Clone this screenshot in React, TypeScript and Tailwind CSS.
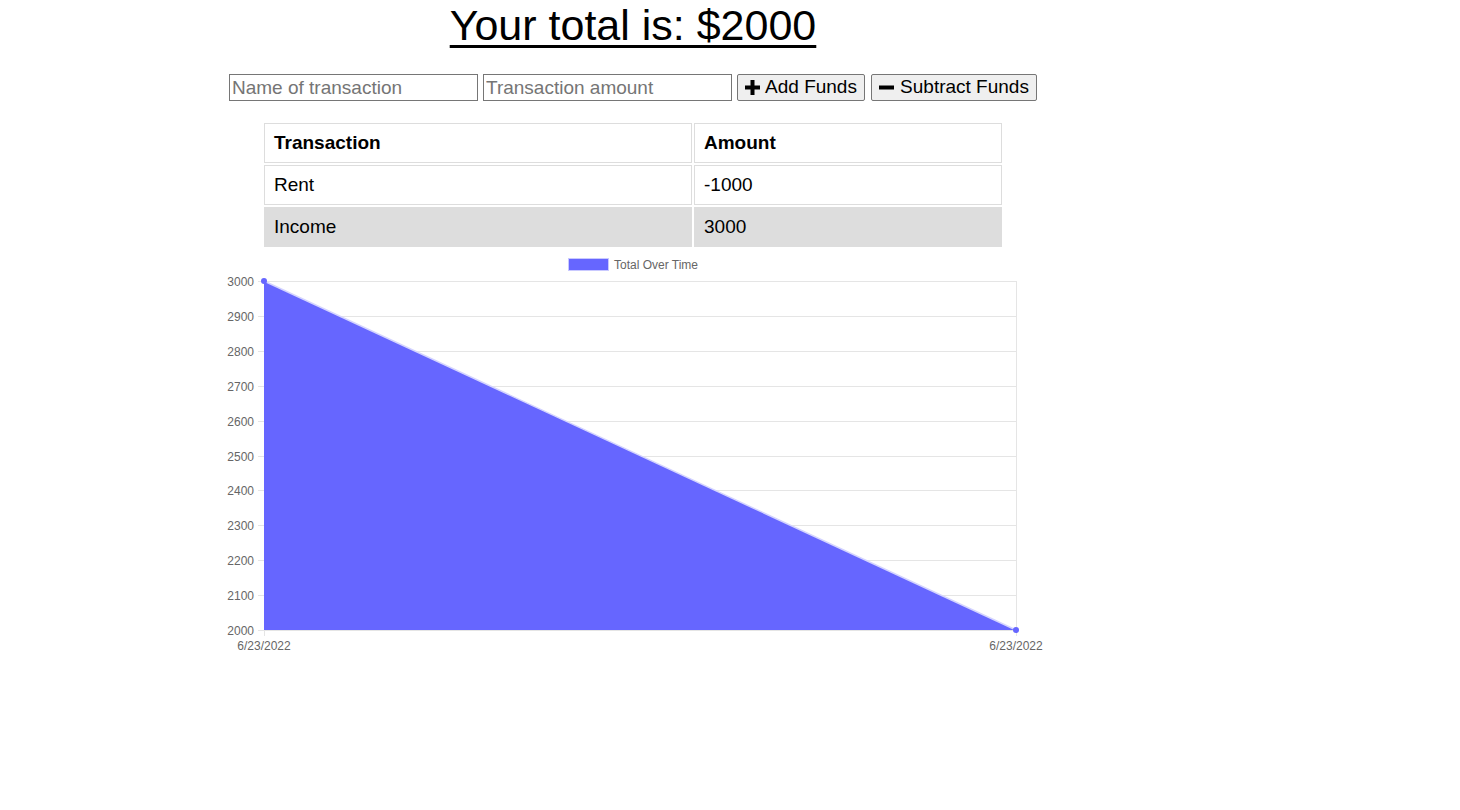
import React from "react";

const yLabels = [3000, 2900, 2800, 2700, 2600, 2500, 2400, 2300, 2200, 2100, 2000];

function Chart() {
  const x0 = 46;
  const x1 = 798;
  const yTop = 29;
  const yBot = 378;
  const step = (yBot - yTop) / 10;
  return (
    <svg width={830} height={410} viewBox="0 0 830 410" className="block">
      {/* legend */}
      <rect x={350.5} y={6.5} width={40} height={12} fill="#6666ff" stroke="#c9c9ff" strokeWidth={1} />
      <text x={396} y={16.5} fontSize={12} fill="#666" fontFamily="'Liberation Sans', Arial, sans-serif">
        Total Over Time
      </text>
      {/* horizontal grid */}
      {yLabels.map((v, i) => {
        const y = Math.round(yTop + i * step) + 0.5;
        return (
          <g key={v}>
            <line x1={40} x2={x1} y1={y} y2={y} stroke="#e5e5e5" strokeWidth={1} />
            <text
              x={36}
              y={y + 4}
              fontSize={12}
              fill="#666"
              textAnchor="end"
              fontFamily="'Liberation Sans', Arial, sans-serif"
            >
              {v}
            </text>
          </g>
        );
      })}
      {/* vertical grid */}
      <line x1={x0 + 0.5} x2={x0 + 0.5} y1={yTop} y2={yBot + 6} stroke="#e5e5e5" />
      <line x1={x1 + 0.5} x2={x1 + 0.5} y1={yTop} y2={yBot + 6} stroke="#e5e5e5" />
      {/* area */}
      <polygon points={`${x0},${yTop} ${x1},${yBot} ${x0},${yBot}`} fill="#6666ff" />
      <line x1={x0} y1={yTop} x2={x1} y2={yBot} stroke="#d4d4ff" strokeWidth={1.5} />
      <circle cx={x0} cy={yTop} r={3} fill="#6666ff" />
      <circle cx={x1} cy={yBot} r={3} fill="#6666ff" />
      {/* x labels */}
      <text x={x0} y={398} fontSize={12} fill="#666" textAnchor="middle" fontFamily="'Liberation Sans', Arial, sans-serif">
        6/23/2022
      </text>
      <text x={x1} y={398} fontSize={12} fill="#666" textAnchor="middle" fontFamily="'Liberation Sans', Arial, sans-serif">
        6/23/2022
      </text>
    </svg>
  );
}

function PlusIcon() {
  return (
    <svg width={15} height={15} viewBox="0 0 15 15" className="shrink-0">
      <rect x={5.5} y={0} width={4} height={15} fill="#000" />
      <rect x={0} y={5.5} width={15} height={4} fill="#000" />
    </svg>
  );
}

function MinusIcon() {
  return (
    <svg width={15} height={15} viewBox="0 0 15 15" className="shrink-0">
      <rect x={0} y={5.5} width={15} height={4} fill="#000" />
    </svg>
  );
}

export default function App() {
  const font = { fontFamily: "'Liberation Sans', Arial, sans-serif" };
  return (
    <div className="min-h-[810px] w-[1460px] bg-white text-black" style={font}>
      <div className="w-[1266px] flex flex-col items-center">
        <h1 className="text-[43px] leading-[50px] underline decoration-[3px] underline-offset-[5px] font-normal">
          Your total is: $2000
        </h1>
        <div className="mt-[24px] flex items-center">
          <input
            placeholder="Name of transaction"
            className="w-[249px] h-[27px] border border-[#767676] px-[2px] pt-[1px] text-[19px] placeholder:text-[#757575] outline-none"
          />
          <input
            placeholder="Transaction amount"
            className="ml-[5px] w-[249px] h-[27px] border border-[#767676] px-[2px] pt-[1px] text-[19px] placeholder:text-[#757575] outline-none"
          />
          <button className="ml-[5px] w-[128px] h-[27px] border border-[#767676] rounded-[2px] bg-[#efefef] text-[19px] flex items-center justify-center gap-[5px]">
            <PlusIcon />
            <span>Add Funds</span>
          </button>
          <button className="ml-[6px] w-[166px] h-[27px] border border-[#767676] rounded-[2px] bg-[#efefef] text-[19px] flex items-center justify-center gap-[6px]">
            <MinusIcon />
            <span>Subtract Funds</span>
          </button>
        </div>
        <table className="mt-[20px] border-separate border-spacing-[2px] text-[19px]">
          <thead>
            <tr>
              <th className="w-[428px] h-[40px] border border-[#ddd] px-[9px] text-left font-bold">Transaction</th>
              <th className="w-[308px] h-[40px] border border-[#ddd] px-[9px] text-left font-bold">Amount</th>
            </tr>
          </thead>
          <tbody>
            <tr>
              <td className="h-[40px] border border-[#ddd] px-[9px]">Rent</td>
              <td className="h-[40px] border border-[#ddd] px-[9px]">-1000</td>
            </tr>
            <tr className="bg-[#ddd]">
              <td className="h-[40px] border border-[#ddd] px-[9px]">Income</td>
              <td className="h-[40px] border border-[#ddd] px-[9px]">3000</td>
            </tr>
          </tbody>
        </table>
        <div className="mt-[3px]">
          <Chart />
        </div>
      </div>
    </div>
  );
}
